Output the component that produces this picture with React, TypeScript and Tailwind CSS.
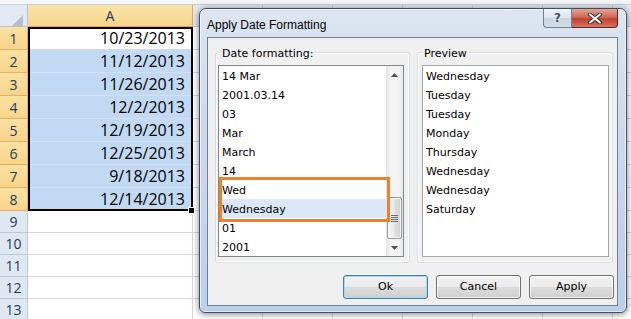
import React from "react";

const dates = [
  "10/23/2013",
  "11/12/2013",
  "11/26/2013",
  "12/2/2013",
  "12/19/2013",
  "12/25/2013",
  "9/18/2013",
  "12/14/2013",
];
const extraCols = [0, 1, 2, 3, 4, 5, 6];
const formats = ["14 Mar", "2001.03.14", "03", "Mar", "March", "14", "Wed", "Wednesday", "01", "2001"];
const previews = ["Wednesday", "Tuesday", "Tuesday", "Monday", "Thursday", "Wednesday", "Wednesday", "Saturday"];

function Sheet() {
  return (
    <div className="font-['Open_Sans',sans-serif]">
      <div className="h-[5px] bg-[#f3f5f8] border-b border-[#c7d0db]" />
      <div className="flex h-[22px]">
        <div className="relative w-[28px] shrink-0 bg-[#e2e9f3] border-r border-b border-[#b7c5d6]">
          <svg className="absolute left-[11px] top-[10px]" width="12" height="12" viewBox="0 0 12 12">
            <polygon points="12,0 12,12 0,12" fill="#b6c0cc" />
          </svg>
        </div>
        <div className="w-[165px] shrink-0 flex items-center justify-center text-[14px] text-[#1e3a5f] bg-[linear-gradient(180deg,#fbe4a8,#f8d58a)] border-r border-b border-[#e5a94f]">
          A
        </div>
        {extraCols.map((c) => (
          <div key={c} className="w-[70px] shrink-0 bg-[#e2e9f3] border-r border-b border-[#c3cfdd]" />
        ))}
      </div>
      {dates.map((d, i) => (
        <div key={d + i} className="flex h-[23px]">
          <div className="w-[28px] shrink-0 flex items-center justify-center text-[14px] text-[#1e3a5f] bg-[linear-gradient(180deg,#fbe1a2,#f8d48a)] border-r border-b border-[#e5b061]">
            {i + 1}
          </div>
          <div
            className={
              i === 0
                ? "w-[165px] shrink-0 flex items-center justify-end pr-[7px] text-[16px] text-black bg-white border-r border-b border-[#d6dce4]"
                : "w-[165px] shrink-0 flex items-center justify-end pr-[7px] text-[16px] text-black bg-[#c2d9f4] border-r border-b border-[#d3e0ef]"
            }
          >
            {d}
          </div>
          {extraCols.map((c) => (
            <div key={c} className="w-[70px] shrink-0 bg-white border-r border-b border-[#d9d9d9]" />
          ))}
        </div>
      ))}
      {[9, 10, 11, 12, 13].map((n) => (
        <div key={n} className="flex h-[22px]">
          <div className="w-[28px] shrink-0 flex items-center justify-center text-[14px] text-[#1e3a5f] bg-[#dfe7f1] border-r border-b border-[#b9c7d8]">
            {n}
          </div>
          <div className="w-[165px] shrink-0 bg-white border-r border-b border-[#d9d9d9]" />
          {extraCols.map((c) => (
            <div key={c} className="w-[70px] shrink-0 bg-white border-r border-b border-[#d9d9d9]" />
          ))}
        </div>
      ))}
    </div>
  );
}

function CaptionButtons() {
  return (
    <div className="absolute right-[8px] top-0 flex h-[19px]">
      <div className="w-[29px] h-[19px] rounded-bl-[4px] border border-t-0 border-[#6e7f94] bg-[linear-gradient(180deg,#eef3f8,#dbe4ee_50%,#c9d5e2_50%,#d3dde8)] flex items-center justify-center">
        <span className="font-['DejaVu_Sans',sans-serif] font-bold text-[12px] leading-none text-[#4a4f57] [text-shadow:0_0_2px_#ffffff]">?</span>
      </div>
      <div className="w-[46px] h-[19px] rounded-br-[4px] border border-t-0 border-l-0 border-[#5b2a24] bg-[linear-gradient(180deg,#e6a294,#d06a58_45%,#c2412e_55%,#d6735f)] flex items-center justify-center">
        <svg width="14" height="11" viewBox="0 0 14 11">
          <path d="M2 1.5 L12 9.5 M12 1.5 L2 9.5" stroke="#3a2a28" strokeWidth="4" strokeLinecap="round" />
          <path d="M2 1.5 L12 9.5 M12 1.5 L2 9.5" stroke="#ffffff" strokeWidth="2.2" strokeLinecap="round" />
        </svg>
      </div>
    </div>
  );
}

function Scrollbar() {
  return (
    <div className="w-[17px] shrink-0 flex flex-col bg-[linear-gradient(90deg,#e4e4e4,#f3f3f3_25%,#f3f3f3_75%,#e8e8e8)]">
      <div className="h-[17px] flex items-center justify-center">
        <svg width="7" height="4" viewBox="0 0 7 4">
          <polygon points="0,4 3.5,0 7,4" fill="#4f4f4f" />
        </svg>
      </div>
      <div className="flex-1 flex flex-col justify-end">
        <div className="mx-[1px] h-[42px] rounded-[2px] border border-[#979797] bg-[linear-gradient(90deg,#f5f5f5,#ececec_45%,#dedede_55%,#d2d2d2)] shadow-[inset_0_0_0_1px_rgba(255,255,255,0.8)] flex flex-col items-center justify-center gap-[1px]">
          <div className="w-[7px] h-[1px] bg-[#6a6a6a]" />
          <div className="w-[7px] h-[1px] bg-[#6a6a6a]" />
          <div className="w-[7px] h-[1px] bg-[#6a6a6a]" />
          <div className="w-[7px] h-[1px] bg-[#6a6a6a]" />
        </div>
      </div>
      <div className="h-[17px] flex items-center justify-center">
        <svg width="7" height="4" viewBox="0 0 7 4">
          <polygon points="0,0 7,0 3.5,4" fill="#4f4f4f" />
        </svg>
      </div>
    </div>
  );
}

function Group({ label, className, children }: { label: string; className: string; children: React.ReactNode }) {
  return (
    <div className={"relative h-[211px] rounded-[3px] border border-[#d5dfe5] shadow-[inset_0_0_0_1px_#ffffff] " + className}>
      <span className="absolute top-[-6px] left-[5px] px-[1px] bg-[#f0f0f0] leading-[14px] text-[11px] text-black">
        {label}
      </span>
      {children}
    </div>
  );
}

function Button({ label, def }: { label: string; def?: boolean }) {
  return (
    <div
      className={
        def
          ? "w-[85px] h-[24px] rounded-[3px] border border-[#3c7fb1] bg-[linear-gradient(180deg,#f2f2f2,#ebebeb_50%,#dddddd_50%,#cfcfcf)] shadow-[inset_0_0_0_1px_#a9d6f3] flex items-center justify-center pt-[1px] text-[11px] text-black"
          : "w-[85px] h-[24px] rounded-[3px] border border-[#707070] bg-[linear-gradient(180deg,#f2f2f2,#ebebeb_50%,#dddddd_50%,#cfcfcf)] shadow-[inset_0_0_0_1px_rgba(255,255,255,0.75)] flex items-center justify-center pt-[1px] text-[11px] text-black"
      }
    >
      {label}
    </div>
  );
}

function Dialog() {
  return (
    <div className="absolute left-[199px] top-[8px] w-[428px] h-[305px] rounded-t-[7px] rounded-b-[6px] border border-[#3f4f63] bg-[linear-gradient(180deg,#dde6f1_0%,#cddbeb_35%,#b9d0ea_100%)] shadow-[0_1px_7px_rgba(0,0,0,0.5),inset_0_0_0_1px_rgba(255,255,255,0.6)] flex flex-col">
      <div className="relative h-[28px] shrink-0 flex items-center pl-[7px] pt-[3px] text-[12px] text-black font-['Liberation_Sans',Arial,sans-serif]">
        Apply Date Formatting
        <CaptionButtons />
      </div>
      <div className="ml-[7px] mr-[8px] mb-[6px] flex-1 bg-[#f0f0f0] border border-[#6d8099] flex flex-col font-['DejaVu_Sans',sans-serif]">
        <div className="flex mt-[14px] ml-[7px] gap-[7px]">
          <Group label="Date formatting:" className="w-[195px]">
            <div className="relative ml-[2px] mt-[12px] w-[186px] h-[192px] border border-[#828790] bg-white flex">
              <div className="w-[167px] shrink-0 flex flex-col">
                {formats.map((f, i) => (
                  <div
                    key={f}
                    className={
                      i === 7
                        ? "h-[19px] pt-[2px] leading-[17px] pl-[3px] text-[11px] text-black bg-[#dce7f8]"
                        : "h-[19px] pt-[2px] leading-[17px] pl-[3px] text-[11px] text-black"
                    }
                  >
                    {f}
                  </div>
                ))}
              </div>
              <Scrollbar />
              <div className="absolute left-[0px] top-[111px] w-[171px] h-[45px] border-[3px] border-[#f07f2c]" />
            </div>
          </Group>
          <Group label="Preview" className="w-[196px]">
            <div className="ml-[4px] mt-[12px] w-[187px] h-[192px] border border-[#a5a9ad] bg-white flex flex-col">
              {previews.map((p, i) => (
                <div key={p + i} className="h-[19px] pt-[2px] leading-[17px] pl-[3px] text-[11px] text-black">
                  {p}
                </div>
              ))}
            </div>
          </Group>
        </div>
        <div className="flex justify-end gap-[8px] mt-[12px] mr-[3px]">
          <Button label="Ok" def />
          <Button label="Cancel" />
          <Button label="Apply" />
        </div>
      </div>
    </div>
  );
}

export default function App() {
  return (
    <div className="relative w-[631px] h-[319px] overflow-hidden bg-white">
      <Sheet />
      <div className="absolute left-[28px] top-[27px] w-[165px] h-[184px] border-2 border-black" />
      <div className="absolute left-[188px] top-[207px] w-[7px] h-[7px] bg-black border border-white" />
      <Dialog />
    </div>
  );
}
